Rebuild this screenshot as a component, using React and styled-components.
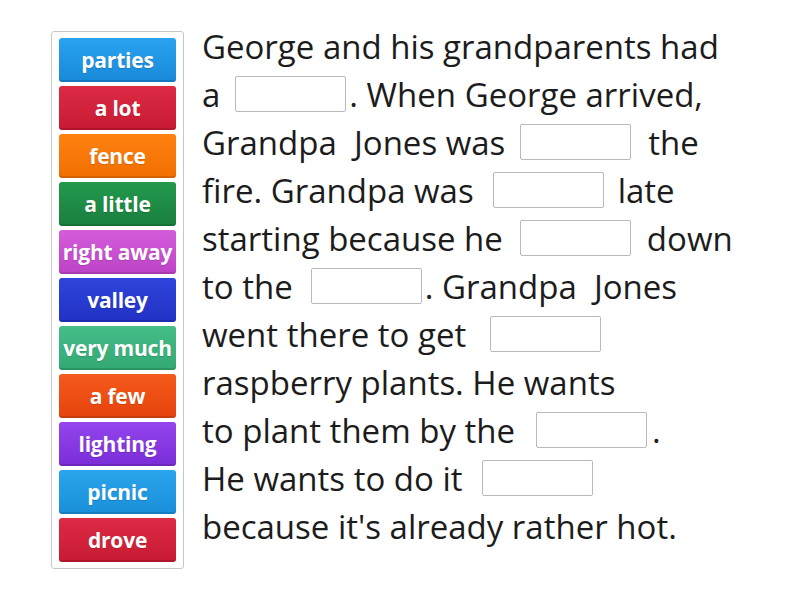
import styled, { createGlobalStyle } from "styled-components";

const Global = createGlobalStyle`
  body {
    margin: 0;
    background: #fff;
    font-family: "Open Sans", "Liberation Sans", sans-serif;
  }
`;

const Page = styled.div`
  display: flex;
  align-items: flex-start;
  padding: 31px 0 0 51px;
  width: 800px;
  height: 600px;
  box-sizing: border-box;
`;

const Bank = styled.div`
  display: flex;
  flex-direction: column;
  gap: 4px;
  padding: 6px 7px 6px 7px;
  border: 1px solid #c8c8c8;
  border-radius: 3px;
  width: 117px;
`;

const Tile = styled.div`
  height: 44px;
  display: flex;
  align-items: center;
  justify-content: center;
  border-radius: 3px;
  background: linear-gradient(to bottom, ${(p) => p.$top}, ${(p) => p.$bottom});
  box-shadow: inset 0 -2px 0 rgba(0, 0, 0, 0.12);
  color: #fff;
  font-weight: 700;
  font-size: 21px;
  white-space: nowrap;
  letter-spacing: -0.2px;
  text-shadow: 0 1px 1px rgba(0, 0, 0, 0.15);
`;

const Passage = styled.div`
  margin-left: 18px;
  margin-top: -9px;
  display: flex;
  flex-direction: column;
  font-size: 33px;
  color: #1c1c1c;
`;

const Line = styled.div`
  height: 48px;
  display: flex;
  align-items: center;
  white-space: pre;
`;

const Gap = styled.span`
  display: inline-block;
  width: 111px;
  height: 36px;
  box-sizing: border-box;
  border: 1px solid #b9b9b9;
  border-radius: 2px;
  background: #fff;
  margin: 0 ${(p) => p.$r ?? 4}px 0 ${(p) => p.$l ?? 14}px;
`;

const tiles = [
  ["parties", "#2aa3f0", "#1889d8"],
  ["a lot", "#dd2a45", "#c81a33"],
  ["fence", "#ff8210", "#f06e00"],
  ["a little", "#23994d", "#1a7f3e"],
  ["right away", "#d45ddb", "#bd43c6"],
  ["valley", "#2f44dc", "#2131c4"],
  ["very much", "#45be88", "#33a873"],
  ["a few", "#f65a1c", "#e5440c"],
  ["lighting", "#9445ec", "#7a2ed8"],
  ["picnic", "#2aa5ec", "#1a8fda"],
  ["drove", "#dd2a45", "#c81a33"],
];

export default function App() {
  return (
    <>
      <Global />
      <Page>
        <Bank>
          {tiles.map(([t, a, b]) => (
            <Tile key={t} $top={a} $bottom={b}>
              {t}
            </Tile>
          ))}
        </Bank>
        <Passage>
          <Line>George and his grandparents had</Line>
          <Line>
            a<Gap $l={15} $r={3} />. When George arrived,
          </Line>
          <Line>
            Grandpa  Jones was<Gap $l={15} $r={17} />the
          </Line>
          <Line>
            fire. Grandpa was<Gap $l={19} $r={14} />late
          </Line>
          <Line>
            starting because he<Gap $l={17} $r={16} />down
          </Line>
          <Line>
            to the<Gap $l={18} $r={3} />. Grandpa  Jones
          </Line>
          <Line>
            went there to get<Gap $l={24} />
          </Line>
          <Line>raspberry plants. He wants</Line>
          <Line>
            to plant them by the<Gap $l={21} $r={5} />.
          </Line>
          <Line>
            He wants to do it<Gap $l={19} />
          </Line>
          <Line>because it's already rather hot.</Line>
        </Passage>
      </Page>
    </>
  );
}
